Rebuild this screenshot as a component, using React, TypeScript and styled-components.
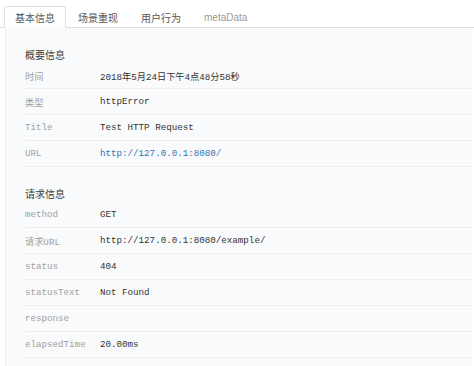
import React from "react";
import styled, { createGlobalStyle } from "styled-components";

const GlobalStyle = createGlobalStyle`
  html, body { margin: 0; padding: 0; background: #ffffff; }
  body { font-family: "Liberation Sans", "Noto Sans CJK SC", sans-serif; }
`;

const Page = styled.div`
  width: 474px;
  height: 366px;
  overflow: hidden;
  background: #ffffff;
`;

const TabBar = styled.div`
  display: flex;
  align-items: flex-end;
  height: 27px;
  padding-left: 4px;
  border-bottom: 1px solid #dedfe2;
`;

const Tab = styled.div<{ $active?: boolean; $latin?: boolean }>`
  box-sizing: border-box;
  height: 22px;
  padding: 0 10px;
  margin-right: 1px;
  margin-bottom: -1px;
  display: flex;
  align-items: center;
  font-family: "Liberation Sans", "Noto Sans CJK SC", sans-serif;
  font-size: 10px;
  color: ${(p) => (p.$latin ? "#9a9a9a" : "#555")};
  border: 1px solid ${(p) => (p.$active ? "#dedfe2" : "transparent")};
  border-bottom: 1px solid ${(p) => (p.$active ? "#ffffff" : "transparent")};
  border-radius: 3px 3px 0 0;
  background: ${(p) => (p.$active ? "#ffffff" : "transparent")};
`;

const Panel = styled.div`
  margin: 0 2px 0 5px;
  height: 338px;
  background: #f9fafb;
  border-left: 1px solid #eeeff1;
`;

const Section = styled.div`
  padding: 21px 0 0 19px;
`;

const SectionTitle = styled.div`
  height: 14px;
  line-height: 14px;
  font-family: "Liberation Sans", "Noto Sans CJK SC", sans-serif;
  font-size: 10px;
  color: #3a3a3a;
  font-weight: 400;
`;

const Row = styled.div`
  display: flex;
  align-items: center;
  height: 25px;
  border-bottom: 1px solid #eceef1;
  font-family: "Liberation Mono", "Noto Sans CJK SC", monospace;
  font-size: 9.2px;
`;

const Label = styled.div`
  width: 75px;
  flex: none;
  color: #a0a0a0;
`;

const Value = styled.div<{ $link?: boolean }>`
  color: ${(p) => (p.$link ? "#3472b8" : "#333")};
`;

const summary: [string, string, boolean?][] = [
  ["时间", "2018年5月24日下午4点48分58秒"],
  ["类型", "httpError"],
  ["Title", "Test HTTP Request"],
  ["URL", "http://127.0.0.1:8080/", true],
];

const request: [string, string][] = [
  ["method", "GET"],
  ["请求URL", "http://127.0.0.1:8080/example/"],
  ["status", "404"],
  ["statusText", "Not Found"],
  ["response", ""],
  ["elapsedTime", "20.00ms"],
];

export default function App() {
  return (
    <Page>
      <GlobalStyle />
      <TabBar>
        <Tab $active>基本信息</Tab>
        <Tab>场景重现</Tab>
        <Tab>用户行为</Tab>
        <Tab $latin>metaData</Tab>
      </TabBar>
      <Panel>
        <Section>
          <SectionTitle>概要信息</SectionTitle>
          {summary.map(([k, v, link]) => (
            <Row key={k}>
              <Label>{k}</Label>
              <Value $link={link}>{v}</Value>
            </Row>
          ))}
        </Section>
        <Section>
          <SectionTitle>请求信息</SectionTitle>
          {request.map(([k, v]) => (
            <Row key={k}>
              <Label>{k}</Label>
              <Value>{v}</Value>
            </Row>
          ))}
        </Section>
      </Panel>
    </Page>
  );
}
